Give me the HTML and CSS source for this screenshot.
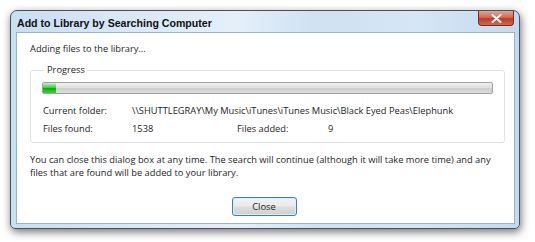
FILE: index.html
```html
<!DOCTYPE html>
<html>
<head>
<meta charset="utf-8">
<link rel="stylesheet" href="styles.css">
</head>
<body>
<div class="window">
  <div class="titlebar">
    <span class="title">Add to Library by Searching Computer</span>
    <div class="close-btn">
      <svg width="11" height="9" viewBox="0 0 11 9"><path d="M1.5 1 L9.5 8 M9.5 1 L1.5 8" stroke="#ffffff" stroke-width="2" stroke-linecap="round"/></svg>
    </div>
  </div>
  <div class="client">
    <p class="status">Adding files to the library...</p>
    <fieldset class="group">
      <legend class="legend">Progress</legend>
      <div class="progress"><div class="progress-fill"></div></div>
      <div class="details">
        <span>Current folder:</span>
        <span class="wide">\\SHUTTLEGRAY\My Music\iTunes\iTunes Music\Black Eyed Peas\Elephunk</span>
        <span>Files found:</span>
        <span>1538</span>
        <span>Files added:</span>
        <span>9</span>
      </div>
    </fieldset>
    <p class="note">You can close this dialog box at any time. The search will continue (although it will take more time) and any files that are found will be added to your library.</p>
    <div class="buttons"><button class="btn">Close</button></div>
  </div>
</div>
</body>
</html>
```
FILE: styles.css
```css
html, body {
  margin: 0;
  padding: 0;
  background: #ffffff;
}
body {
  width: 535px;
  height: 242px;
  overflow: hidden;
  font-family: "Open Sans", "Noto Sans", sans-serif;
  font-size: 9.3px;
  color: #1e1e1e;
}
.window {
  margin: 10px 0 0 10px;
  width: 508px;
  height: 217px;
  border: 1px solid #4a5158;
  border-radius: 7px 7px 5px 5px;
  background: linear-gradient(90deg, #c9def2 0%, #d7e7f6 20%, #e4eff9 45%, #cfe1f2 60%, #d6e6f5 80%, #c2daf0 100%);
  box-shadow: 1px 3px 8px rgba(0,0,0,0.55);
  display: flex;
  flex-direction: column;
}
.titlebar {
  height: 21px;
  display: flex;
  align-items: flex-start;
  justify-content: space-between;
  padding-left: 6px;
}
.title {
  font-family: "Liberation Sans", Arial, sans-serif;
  font-weight: bold;
  font-size: 10.6px;
  color: #101010;
  margin-top: 6px;
}
.close-btn {
  width: 34px;
  height: 14px;
  margin-right: 5px;
  border: 1px solid #7a2a22;
  border-top: none;
  border-radius: 0 0 4px 4px;
  background: linear-gradient(180deg, #e5a392 0%, #d46a55 45%, #bf3b26 55%, #cf6a4e 100%);
  display: flex;
  align-items: center;
  justify-content: center;
}
.client {
  flex: 1;
  margin: 0 4px 4px 5px;
  background: #ffffff;
  border: 1px solid #9bb2c9;
  padding: 0 9px 0 13px;
  display: flex;
  flex-direction: column;
}
.status {
  margin: 9px 0 0 0;
  line-height: 13px;
}
.group {
  margin: 9px 0 0 0;
  padding: 6px 11px 7px 11px;
  border: 1px solid #dde4e9;
  border-radius: 3px;
  min-width: 0;
}
.legend {
  padding: 0 2px;
  margin-left: 3px;
  line-height: 12px;
}
.progress {
  height: 10px;
  border: 1px solid #9fa3a6;
  border-radius: 2px;
  background: linear-gradient(180deg, #f2f2f2 0%, #e0e0e0 45%, #cfcfcf 55%, #dcdcdc 100%);
  margin-top: 0;
}
.progress-fill {
  width: 13px;
  height: 100%;
  background: linear-gradient(180deg, #c8f5c2 0%, #3ed03e 45%, #0bb00b 55%, #3bd13b 100%);
}
.details {
  display: grid;
  grid-template-columns: 89px 105px 91px auto;
  row-gap: 5px;
  margin-top: 10px;
  padding-left: 1px;
  line-height: 13px;
}
.details .wide {
  grid-column: span 3;
  white-space: nowrap;
}
.note {
  margin: 10px 0 0 0;
  line-height: 13px;
}
.buttons {
  display: flex;
  justify-content: center;
  margin-top: 18px;
  padding-right: 7px;
}
.btn {
  width: 65px;
  height: 19px;
  padding: 0;
  font-family: inherit;
  font-size: 9.3px;
  color: #1e1e1e;
  border: 1px solid #3c7fb1;
  border-radius: 3px;
  background: linear-gradient(180deg, #f2f2f2 0%, #ebebeb 45%, #dddddd 55%, #cfcfcf 100%);
  box-shadow: inset 0 0 0 1px #d4f0fb;
}
```
